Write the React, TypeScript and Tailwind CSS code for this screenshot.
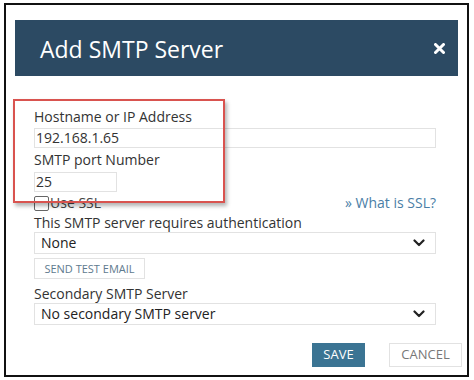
import React from 'react';

const Chevron = () => (
  <svg width="12" height="8" viewBox="0 0 12 8" className="shrink-0">
    <polyline points="1.5,1.5 6,6 10.5,1.5" fill="none" stroke="#222" strokeWidth="2.2" strokeLinecap="round" strokeLinejoin="round" />
  </svg>
);

const CloseIcon = () => (
  <svg width="11" height="11" viewBox="0 0 11 11">
    <path d="M1.5 1.5 L9.5 9.5 M9.5 1.5 L1.5 9.5" stroke="#fff" strokeWidth="3" strokeLinecap="round" />
  </svg>
);

const SelectBox: React.FC<{ value: string }> = ({ value }) => (
  <div className="flex h-[22px] w-[402px] items-center justify-between border border-[#e2e2e2] pl-[6px] pr-[10px] text-[14px] leading-none text-[#222]">
    <span>{value}</span>
    <Chevron />
  </div>
);

export default function App() {
  return (
    <div className="h-[380px] w-[474px] bg-white pl-[4px] pt-[3px]" style={{ fontFamily: '"Open Sans", "Liberation Sans", sans-serif' }}>
      <div className="relative h-[374px] w-[465px] border-2 border-[#111] px-[9px] pt-[15px]">
        {/* header */}
        <div className="flex h-[56px] items-center justify-between bg-[#2c4a63] pl-[25px] pr-[13px]">
          <h1 className="pt-[2px] text-[23px] font-normal leading-none text-white">Add SMTP Server</h1>
          <CloseIcon />
        </div>

        {/* form */}
        <div className="flex flex-col pl-[19px] pt-[31px] text-[14px] leading-[20px] text-[#333]">
          <label className="h-[21px]">Hostname or IP Address</label>
          <div className="flex h-[20px] w-[402px] items-center border border-[#e2e2e2] px-[1px]">192.168.1.65</div>
          <label className="mt-[1px] h-[23px] leading-[22px]">SMTP port Number</label>
          <div className="flex h-[20px] w-[83px] items-center border border-[#e2e2e2] px-[1px]">25</div>

          <div className="mt-[2px] flex h-[18px] w-[402px] items-center justify-between">
            <div className="flex items-center">
              <span className="h-[15px] w-[15px] rounded-[2px] border border-[#666]" />
              <span className="ml-[1px] text-[#444]">Use SSL</span>
            </div>
            <span className="text-[#4a7ea6]">» What is SSL?</span>
          </div>

          <label className="h-[20px] leading-[22px]">This SMTP server requires authentication</label>
          <SelectBox value="None" />

          <div className="mt-[4px] flex h-[21px] w-[111px] items-center justify-center border border-[#e2e2e2] text-[11px] uppercase text-[#5e7a8e]">
            Send test email
          </div>

          <label className="mt-[4px] h-[20px] leading-[22px]">Secondary SMTP Server</label>
          <SelectBox value="No secondary SMTP server" />
        </div>

        <div className="mt-[18px] -mr-[4px] flex justify-end gap-[24px]">
          <button className="h-[24px] w-[53px] bg-[#3b7493] text-[13px] text-white">SAVE</button>
          <button className="h-[24px] w-[73px] border border-[#e2e2e2] bg-white text-[13px] text-[#777]">CANCEL</button>
        </div>

        {/* highlight box */}
        <div className="absolute left-[7px] top-[94px] h-[104px] w-[212px] border-2 border-[#d9534f] shadow-[2px_3px_4px_rgba(0,0,0,0.3)]" />
      </div>
    </div>
  );
}
